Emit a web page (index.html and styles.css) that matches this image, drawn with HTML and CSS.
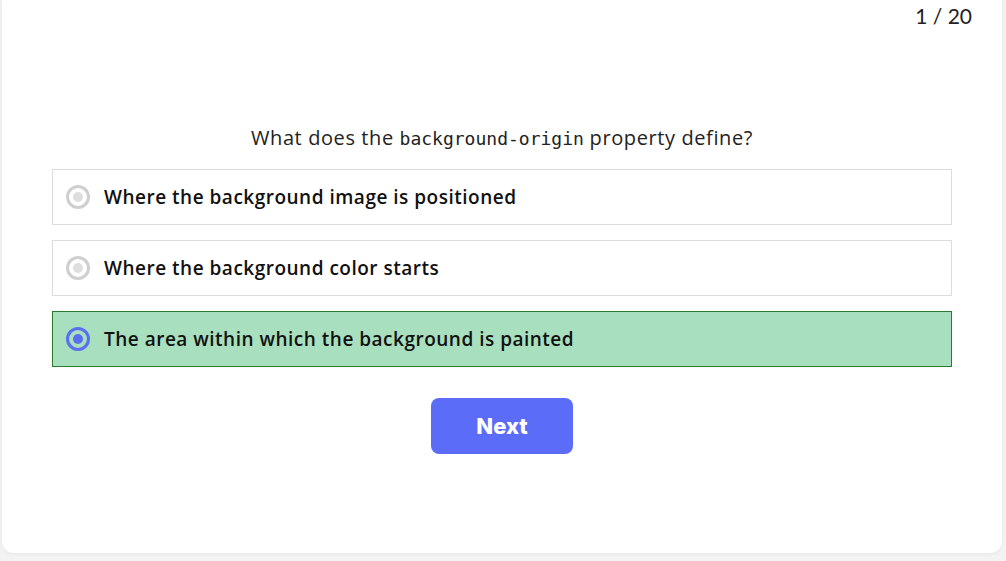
FILE: index.html
```html
<!DOCTYPE html>
<html lang="en">
<head>
<meta charset="utf-8">
<title>Quiz</title>
<link rel="stylesheet" href="styles.css">
</head>
<body>
<main class="card">
  <div class="counter">1 / 20</div>
  <h1 class="question">What does the <code>background-origin</code> property define?</h1>
  <div class="options">
    <label class="option">
      <span class="radio"></span>
      <span class="label">Where the background image is positioned</span>
    </label>
    <label class="option">
      <span class="radio"></span>
      <span class="label">Where the background color starts</span>
    </label>
    <label class="option selected">
      <span class="radio"></span>
      <span class="label">The area within which the background is painted</span>
    </label>
  </div>
  <div class="actions">
    <button class="next">Next</button>
  </div>
</main>
</body>
</html>
```

FILE: styles.css
```css
html, body {
  margin: 0;
  padding: 0;
}
body {
  background: #f3f3f3;
  font-family: "Open Sans", "DejaVu Sans", sans-serif;
  color: #111;
  height: 561px;
  overflow: hidden;
}
.card {
  box-sizing: border-box;
  margin: -12px 0 0 2px;
  width: 1000px;
  height: 565px;
  background: #fff;
  border-radius: 12px;
  box-shadow: 0 1px 4px rgba(0, 0, 0, 0.06);
  padding: 13px 50px 0 50px;
  display: flex;
  flex-direction: column;
}
.counter {
  align-self: flex-end;
  margin-right: -20px;
  font-family: "Lato", sans-serif;
  font-size: 21px;
  line-height: 30px;
  color: #222;
}
.question {
  margin: 92px 0 0 0;
  text-align: center;
  font-size: 20px;
  font-weight: 400;
  letter-spacing: 0.6px;
  line-height: 30px;
  color: #222;
}
.question code {
  font-family: "DejaVu Sans Mono", monospace;
  font-size: 18px;
  letter-spacing: 0;
}
.options {
  margin-top: 15px;
  display: flex;
  flex-direction: column;
  gap: 15px;
}
.option {
  box-sizing: border-box;
  height: 56px;
  border: 1px solid #dcdcdc;
  background: #fff;
  display: flex;
  align-items: center;
  padding-left: 13px;
  gap: 14px;
}
.option.selected {
  background: #a8dfbe;
  border-color: #2a7a30;
}
.radio {
  box-sizing: border-box;
  width: 24px;
  height: 24px;
  border-radius: 50%;
  border: 3px solid #cfcfcf;
  display: flex;
  align-items: center;
  justify-content: center;
}
.radio::after {
  content: "";
  width: 10px;
  height: 10px;
  border-radius: 50%;
  background: #dedede;
}
.selected .radio {
  border-color: #5a6ff0;
}
.selected .radio::after {
  background: #5a6ff0;
}
.label {
  font-size: 19px;
  font-weight: 600;
  letter-spacing: 0.5px;
  color: #111;
}
.actions {
  margin-top: 31px;
  display: flex;
  justify-content: center;
}
.next {
  width: 142px;
  height: 56px;
  border: none;
  border-radius: 8px;
  background: #5b6cf9;
  color: #fff;
  font-family: "Inter", "Roboto", sans-serif;
  font-size: 22px;
  font-weight: 800;
}
```
